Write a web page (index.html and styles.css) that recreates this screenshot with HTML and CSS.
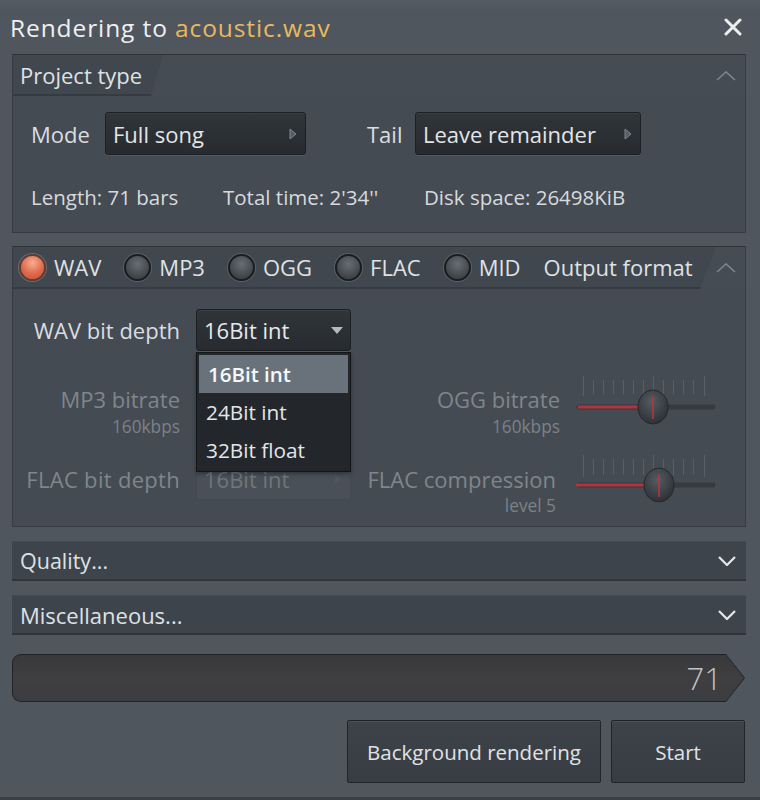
FILE: index.html
```html
<!DOCTYPE html>
<html>
<head>
<meta charset="utf-8">
<link rel="stylesheet" href="styles.css">
</head>
<body>
<div class="window">
  <header class="titlebar">
    <h1 class="title">Rendering to <span class="file">acoustic.wav</span></h1>
    <span class="close"><svg width="18" height="18" viewBox="0 0 18 18"><path d="M2 2 L16 16 M16 2 L2 16" stroke="#eceef0" stroke-width="3" stroke-linecap="round"/></svg></span>
  </header>

  <section class="panel project">
    <div class="panel-head">
      <div class="tab tab-project">Project type</div>
      <span class="chev-up"><svg width="20" height="10" viewBox="0 0 20 10"><polyline points="1,9 10,1 19,9" fill="none" stroke="#7f868c" stroke-width="1.6"/></svg></span>
    </div>
    <div class="mode-row">
      <span class="lbl mode-lbl">Mode</span>
      <div class="combo combo-mode"><span>Full song</span><svg class="tri-r" width="8" height="12" viewBox="0 0 8 12"><path d="M1 1 L7 6 L1 11 Z" fill="#575d63" stroke="#80868c" stroke-width="1"/></svg></div>
      <span class="lbl tail-lbl">Tail</span>
      <div class="combo combo-tail"><span>Leave remainder</span><svg class="tri-r" width="8" height="12" viewBox="0 0 8 12"><path d="M1 1 L7 6 L1 11 Z" fill="#575d63" stroke="#80868c" stroke-width="1"/></svg></div>
    </div>
    <div class="info-row">
      <span class="info-len">Length: 71 bars</span>
      <span class="info-time">Total time: 2'34''</span>
      <span class="info-disk">Disk space: 26498KiB</span>
    </div>
  </section>

  <section class="panel output">
    <div class="panel-head">
      <div class="tab tab-output">
        <label class="radio on"><span class="dot"></span>WAV</label>
        <label class="radio"><span class="dot"></span>MP3</label>
        <label class="radio"><span class="dot"></span>OGG</label>
        <label class="radio"><span class="dot"></span>FLAC</label>
        <label class="radio"><span class="dot"></span>MID</label>
        <span class="out-title">Output format</span>
      </div>
      <span class="chev-up"><svg width="20" height="10" viewBox="0 0 20 10"><polyline points="1,9 10,1 19,9" fill="none" stroke="#7f868c" stroke-width="1.6"/></svg></span>
    </div>
    <div class="out-grid">
      <div class="cell-lbl r1"><span class="main bright">WAV bit depth</span></div>
      <div class="cell-ctl r1">
        <div class="combo combo-wav"><span>16Bit int</span><svg class="tri-d" width="12" height="7" viewBox="0 0 12 7"><path d="M0 0 L12 0 L6 7 Z" fill="#b4b9bd"/></svg></div>
        <ul class="popup">
          <li class="sel">16Bit int</li>
          <li>24Bit int</li>
          <li>32Bit float</li>
        </ul>
      </div>
      <div class="cell-rl r1"></div>
      <div class="cell-sl r1"></div>

      <div class="cell-lbl r2"><span class="main">MP3 bitrate</span><span class="sub">160kbps</span></div>
      <div class="cell-ctl r2"></div>
      <div class="cell-rl r2"><span class="main">OGG bitrate</span><span class="sub">160kbps</span></div>
      <div class="cell-sl r2">
        <svg class="slider" width="140" height="64" viewBox="0 0 140 64">
          <defs>
            <radialGradient id="kg1" cx="45%" cy="35%" r="70%"><stop offset="0" stop-color="#555b62"/><stop offset="1" stop-color="#2a2e33"/></radialGradient>
          </defs>
          <g stroke="#6a7077" stroke-width="1" opacity="0.55">
            <line x1="7.5" y1="7" x2="7.5" y2="27"/><line x1="17.5" y1="11" x2="17.5" y2="25"/><line x1="27.5" y1="11" x2="27.5" y2="25"/><line x1="37.5" y1="11" x2="37.5" y2="25"/><line x1="47.5" y1="11" x2="47.5" y2="25"/><line x1="57.5" y1="11" x2="57.5" y2="25"/><line x1="67.5" y1="11" x2="67.5" y2="25"/><line x1="77.5" y1="7" x2="77.5" y2="25"/><line x1="87.5" y1="11" x2="87.5" y2="25"/><line x1="97.5" y1="11" x2="97.5" y2="25"/><line x1="107.5" y1="11" x2="107.5" y2="25"/><line x1="117.5" y1="11" x2="117.5" y2="25"/><line x1="128.5" y1="7" x2="128.5" y2="27"/>
          </g>
          <line x1="3" y1="38" x2="137" y2="38" stroke="#363b41" stroke-width="5" stroke-linecap="round"/>
          <line x1="2" y1="38" x2="66" y2="38" stroke="#b4333b" stroke-width="3"/>
          <ellipse cx="77" cy="38" rx="15" ry="17" fill="url(#kg1)" stroke="#24282c" stroke-width="1"/>
          <line x1="77" y1="27" x2="77" y2="50" stroke="#b8363d" stroke-width="1.5"/>
        </svg>
      </div>

      <div class="cell-lbl r3"><span class="main">FLAC bit depth</span></div>
      <div class="cell-ctl r3">
        <div class="combo combo-flac"><span>16Bit int</span><svg class="tri-r" width="8" height="12" viewBox="0 0 8 12"><path d="M1 1 L7 6 L1 11 Z" fill="#50565c"/></svg></div>
      </div>
      <div class="cell-rl r3"><span class="main">FLAC compression</span><span class="sub">level 5</span></div>
      <div class="cell-sl r3">
        <svg class="slider" width="140" height="64" viewBox="0 0 140 64">
          <defs>
            <radialGradient id="kg2" cx="45%" cy="35%" r="70%"><stop offset="0" stop-color="#555b62"/><stop offset="1" stop-color="#2a2e33"/></radialGradient>
          </defs>
          <g stroke="#6a7077" stroke-width="1" opacity="0.55">
            <line x1="7.5" y1="7" x2="7.5" y2="29"/><line x1="17.5" y1="11" x2="17.5" y2="27"/><line x1="27.5" y1="11" x2="27.5" y2="27"/><line x1="37.5" y1="11" x2="37.5" y2="27"/><line x1="47.5" y1="11" x2="47.5" y2="27"/><line x1="57.5" y1="11" x2="57.5" y2="27"/><line x1="67.5" y1="11" x2="67.5" y2="27"/><line x1="77.5" y1="7" x2="77.5" y2="27"/><line x1="87.5" y1="11" x2="87.5" y2="27"/><line x1="97.5" y1="11" x2="97.5" y2="27"/><line x1="107.5" y1="11" x2="107.5" y2="27"/><line x1="117.5" y1="11" x2="117.5" y2="27"/><line x1="128.5" y1="7" x2="128.5" y2="29"/>
          </g>
          <line x1="3" y1="37" x2="137" y2="37" stroke="#363b41" stroke-width="5" stroke-linecap="round"/>
          <line x1="0" y1="37" x2="70" y2="37" stroke="#b4333b" stroke-width="3"/>
          <ellipse cx="83" cy="37" rx="15" ry="17" fill="url(#kg2)" stroke="#24282c" stroke-width="1"/>
          <line x1="83" y1="26" x2="83" y2="49" stroke="#b8363d" stroke-width="1.5"/>
        </svg>
      </div>
    </div>
  </section>

  <div class="fold">
    <span>Quality...</span>
    <svg width="18" height="10" viewBox="0 0 18 10"><polyline points="1,1 9,9 17,1" fill="none" stroke="#e4e7ea" stroke-width="2.2"/></svg>
  </div>
  <div class="fold">
    <span>Miscellaneous...</span>
    <svg width="18" height="10" viewBox="0 0 18 10"><polyline points="1,1 9,9 17,1" fill="none" stroke="#e4e7ea" stroke-width="2.2"/></svg>
  </div>

  <div class="progress">
    <div class="progress-in"><span class="count">71</span></div>
  </div>

  <div class="actions">
    <button class="btn btn-bg">Background rendering</button>
    <button class="btn btn-start">Start</button>
  </div>
</div>
</body>
</html>
```

FILE: styles.css
```css
* { box-sizing: border-box; }
html, body { margin: 0; padding: 0; }
body {
  width: 760px;
  height: 800px;
  background: #50565d;
  font-family: "Open Sans", "Noto Sans", sans-serif;
  color: #d6dadd;
  overflow: hidden;
}
.window {
  height: 800px;
  border-bottom: 3px solid #3a3f44;
  display: flex;
  flex-direction: column;
}
.titlebar {
  height: 54px;
  flex: none;
  display: flex;
  align-items: center;
  justify-content: space-between;
  padding: 0 18px 0 10px;
  background: linear-gradient(#565c63, #50565d 20%);
}
.title {
  margin: 0;
  font-weight: 400;
  font-size: 24.5px;
  letter-spacing: 0.9px;
  color: #eef0f2;
}
.file { color: #e8b963; }
.close { display: flex; }

.panel {
  flex: none;
  margin: 0 14px 0 12px;
  background: #454b52;
  border: 1px solid #363b41;
  border-top-color: #2f3439;
}
.panel-head {
  display: flex;
  align-items: stretch;
  justify-content: space-between;
  background: #464c53;
}
.tab {
  display: flex;
  align-items: center;
  background: #41474e;
  border-bottom: 2px solid #363b41;
}
.tab-project {
  height: 41px;
  width: 150px;
  padding-left: 7px;
  font-size: 22px;
  color: #dfe2e5;
  clip-path: polygon(0 0, 100% 0, calc(100% - 12px) 100%, 0 100%);
}
.chev-up {
  display: flex;
  align-items: center;
  padding-right: 9px;
}
.mode-row {
  display: flex;
  align-items: center;
  margin-top: 16px;
  padding-left: 18px;
}
.lbl { font-size: 22px; color: #dadee1; }
.mode-lbl { width: 74px; }
.combo {
  position: relative;
  display: flex;
  align-items: center;
  justify-content: space-between;
  height: 43px;
  padding: 0 8px 0 7px;
  background: linear-gradient(#30353a, #272b30);
  border: 1px solid #1c1f23;
  border-radius: 3px;
  box-shadow: 0 1px 0 #525960, inset 0 1px 0 #3a3f45;
  font-size: 22px;
  color: #e2e5e8;
}
.combo-mode { width: 201px; }
.tail-lbl { margin-left: 61px; width: 48px; }
.combo-tail { width: 226px; }
.info-row {
  display: flex;
  align-items: center;
  height: 42px;
  margin-top: 21px;
  margin-bottom: 14px;
  padding-left: 18px;
  font-size: 20.5px;
  color: #d6dadd;
}
.info-len { width: 192px; }
.info-time { width: 201px; }

.output { margin-top: 13px; }
.tab-output {
  height: 42px;
  width: 703px;
  padding-left: 6px;
  clip-path: polygon(0 0, 100% 0, calc(100% - 16px) 100%, 0 100%);
  font-size: 22px;
}
.radio {
  display: flex;
  align-items: center;
  gap: 8px;
  margin-right: 23px;
  color: #dfe2e5;
}
.dot {
  width: 27px;
  height: 27px;
  border-radius: 50%;
  border: 2px solid #1a1d20;
  background: radial-gradient(circle at 50% 35%, #676d73, #3d4247 75%);
  box-shadow: 0 0 0 1px #5a6066;
}
.radio.on .dot {
  border-color: #5a3f3a;
  background: radial-gradient(circle at 50% 30%, #f7ad91, #e0694b 55%, #c94e34);
  box-shadow: 0 0 0 1px #7a6a66;
}
.out-title { margin-left: 0; color: #dfe2e5; }

.out-grid {
  display: grid;
  grid-template-columns: 167px 154px 194px 135px;
  grid-template-rows: 42px 70px 79px;
  column-gap: 16px;
  row-gap: 10px;
  padding: 20px 0 6px 0;
}
.cell-lbl, .cell-rl {
  display: flex;
  flex-direction: column;
  align-items: flex-end;
  text-align: right;
}
.r1.cell-lbl { justify-content: center; }
.main { font-size: 22px; line-height: 28px; color: #7f868c; white-space: nowrap; }
.main.bright { color: #d9dde0; }
.cell-lbl.r3 .main { letter-spacing: 0.3px; }
.sub { font-size: 17.3px; line-height: 20px; color: #7b8288; margin-top: 4px; }
.r2.cell-lbl, .r2.cell-rl, .r3.cell-lbl, .r3.cell-rl { padding-top: 24px; }
.r3 .sub { margin-top: 3px; }
.cell-rl.r3 { margin-right: 4px; }
.cell-ctl { position: relative; }
.slider { display: block; margin-top: 8px; }
.r3 .slider { margin-top: 7px; }

.combo-wav { width: 155px; height: 42px; padding-right: 7px; color: #e6e9eb; }
.combo-flac {
  width: 155px;
  height: 42px;
  margin-top: 17px;
  background: #4a5057;
  border-color: #43494f;
  box-shadow: none;
  color: #6f767c;
}
.popup {
  position: absolute;
  top: 43px;
  left: 0;
  width: 155px;
  margin: 0;
  padding: 2px 2px;
  list-style: none;
  background: #23272c;
  border: 1px solid #131619;
  box-shadow: 0 2px 4px rgba(0,0,0,0.35);
  z-index: 2;
}
.popup li {
  height: 38px;
  line-height: 38px;
  padding-left: 7px;
  font-size: 20.8px;
  color: #e3e6e8;
}
.popup li.sel {
  background: #69727a;
  color: #f6f7f8;
  font-weight: 600;
  font-size: 20.5px;
  padding-left: 9px;
}

.fold {
  flex: none;
  margin: 14px 14px 0 12px;
  height: 40px;
  display: flex;
  align-items: center;
  justify-content: space-between;
  padding: 0 10px 0 8px;
  background: #3e444b;
  border-top: 1px solid #454b52;
  border-bottom: 2px solid #30353a;
  font-size: 22px;
  color: #dfe2e5;
}
.fold:first-of-type { font-size: 21.5px; }

.progress {
  flex: none;
  margin: 19px 15px 0 12px;
  height: 48px;
  padding: 1px;
  background: #1f2226;
  border-radius: 9px 0 0 9px;
  clip-path: polygon(0 0, calc(100% - 19px) 0, 100% 50%, calc(100% - 19px) 100%, 0 100%);
}
.progress-in {
  height: 100%;
  display: flex;
  align-items: center;
  justify-content: flex-end;
  padding-right: 22px;
  background: linear-gradient(#38393c, #3f3e40 50%, #3b3d41);
  border-radius: 8px 0 0 8px;
  clip-path: polygon(0 0, calc(100% - 18px) 0, 100% 50%, calc(100% - 18px) 100%, 0 100%);
}
.count {
  font-size: 31px;
  font-weight: 300;
  color: #bfc3c7;
}

.actions {
  flex: none;
  display: flex;
  justify-content: flex-end;
  gap: 10px;
  margin: 18px 15px 0 0;
}
.btn {
  height: 63px;
  background: linear-gradient(#3e434a, #383d43);
  border: 1px solid #202428;
  border-radius: 2px;
  box-shadow: inset 0 1px 0 #4b5158;
  font-family: "Open Sans", "Noto Sans", sans-serif;
  font-size: 20.5px;
  color: #e0e3e6;
}
.btn-bg { width: 254px; }
.btn-start { width: 134px; }
```
